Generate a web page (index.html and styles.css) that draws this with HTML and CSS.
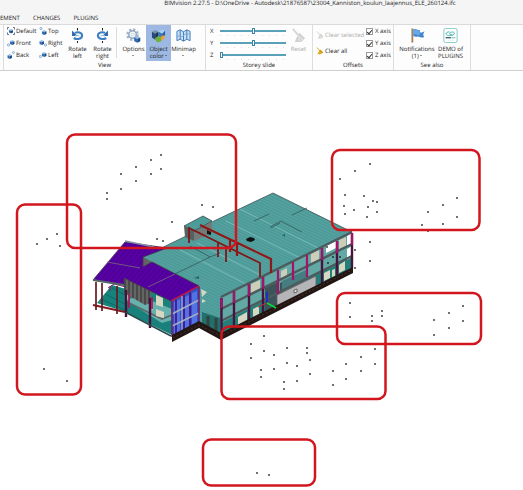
FILE: index.html
```
<!DOCTYPE html>
<html lang="en">
<head>
    <meta charset="UTF-8">
    <meta name="viewport" content="width=device-width, initial-scale=1.0">
    <title>BIMvision 2.27.5</title>
    <link rel="stylesheet" href="styles.css">
</head>
<body>
    <!-- shared icons -->
    <svg class="sprite" aria-hidden="true">
        <symbol id="cube" viewBox="0 0 10 10">
            <path d="M1 3l4-2 4 2-4 2z" fill="#8fbbe8"/>
            <path d="M1 3l4 2v5L1 8z" fill="#2f69ae"/>
            <path d="M9 3L5 5v5l4-2z" fill="#174986"/>
        </symbol>
        <symbol id="view-default" viewBox="0 0 16 16">
            <path d="M1 5V1h3M12 1h3v4M15 11v4h-3M4 15H1v-4" fill="none" stroke="#33475f" stroke-width="1.5"/>
            <use href="#cube" x="3" y="3" width="10" height="10"/>
        </symbol>
        <symbol id="view-front" viewBox="0 0 16 16">
            <use href="#cube" x="5" y="1" width="11" height="11"/>
            <circle cx="3" cy="12" r="2.4" fill="#dbe9f7" stroke="#5580b0"/>
        </symbol>
        <symbol id="view-back" viewBox="0 0 16 16">
            <use href="#cube" x="0" y="5" width="11" height="11"/>
            <circle cx="13" cy="3" r="2.2" fill="#dbe9f7" stroke="#5580b0"/>
        </symbol>
        <symbol id="view-top" viewBox="0 0 16 16">
            <use href="#cube" x="5" y="5" width="11" height="11"/>
            <circle cx="4" cy="3" r="2.4" fill="#dbe9f7" stroke="#5580b0"/>
        </symbol>
        <symbol id="view-right" viewBox="0 0 16 16">
            <use href="#cube" x="0" y="1" width="11" height="11"/>
            <circle cx="13" cy="12" r="2.4" fill="#dbe9f7" stroke="#5580b0"/>
        </symbol>
        <symbol id="view-left" viewBox="0 0 16 16">
            <use href="#cube" x="5" y="1" width="11" height="11"/>
            <circle cx="3" cy="11" r="2.4" fill="#dbe9f7" stroke="#5580b0"/>
        </symbol>
        <symbol id="rotate" viewBox="0 0 32 36">
            <path d="M16 0v6M16 31v5" stroke="#222" stroke-width="2.500"/>
            <path d="M10 12c6-4 17-1 17 6 0 8-12 11-20 6" fill="none" stroke="#3d7fc2" stroke-width="5"/>
            <path d="M3 6v13h13z" fill="#2c68aa"/>
            <path d="M10 19c5-2 10-1 10 1" fill="none" stroke="#8db9e4" stroke-width="3"/>
        </symbol>
        <symbol id="gear" viewBox="0 0 32 32">
            <circle cx="14" cy="14" r="11" fill="none" stroke="#a7b6c6" stroke-width="5" stroke-dasharray="5 3.6"/>
            <circle cx="14" cy="14" r="8" fill="#f2f6fa" stroke="#8fa6bf" stroke-width="3"/>
            <circle cx="14" cy="14" r="3" fill="#fff" stroke="#a7b6c6"/>
            <use href="#cube" x="16" y="15" width="16" height="17"/>
        </symbol>
        <symbol id="colors" viewBox="0 0 32 32">
            <path d="M2 8l7-4 7 4-7 4z" fill="#7890a8"/>
            <path d="M2 8l7 4v13l-7-5z" fill="#294a73"/>
            <path d="M9 12l7-4v11l-7 6z" fill="#1a3559"/>
            <path d="M16 8l7-5 7 3-6 6z" fill="#a4cffa"/>
            <path d="M16 8l8 4v9l-8-3z" fill="#3c79ba"/>
            <path d="M30 6l-6 6v9l6-5z" fill="#2a5d9c"/>
            <path d="M8 23l7-6 9 4-2 7-9 3z" fill="#6bb33c"/>
            <path d="M21 18l8-3-1 8-7 4z" fill="#ef9d31"/>
        </symbol>
        <symbol id="map" viewBox="0 0 32 28">
            <path d="M2 5l7-3 7 4 7-4 7 3v20l-7-3-7 4-7-4-7 3z" fill="#c9e0f6" stroke="#3e7ab8" stroke-width="2"/>
            <path d="M9 2v20M16 6v20M23 2v20" stroke="#3e7ab8" stroke-width="2"/>
            <path d="M3 17c5-7 9 4 13-3s9 1 13-5" fill="none" stroke="#72a5d7" stroke-width="2"/>
        </symbol>
        <symbol id="broom" viewBox="0 0 16 16">
            <path d="M2 1l6 7" stroke="currentColor" stroke-width="2"/>
            <path d="M9 5l6 6-7 4-5-1 2-4z" fill="currentColor"/>
            <path d="M7 6l6 6" stroke="#8d742e" stroke-width="1"/>
        </symbol>
        <symbol id="broom-off" viewBox="0 0 16 16">
            <path d="M2 1l6 7" stroke="#d5d5d5" stroke-width="2"/>
            <path d="M9 5l6 6-4 4H4l2-5z" fill="#d2d2d2"/>
            <path d="M7 8l6 5M8 11l2 3" stroke="#efefef"/>
        </symbol>
        <symbol id="flag" viewBox="0 0 32 32">
            <path d="M3 1h4v30H3z" fill="#a98354"/>
            <path d="M7 3c6-3 9 3 14 1v5c3 2 6 0 10-2l-3 7 2 5c-6 4-10-2-14-1-4 1-6 0-9-1z" fill="#4285cf"/>
            <path d="M7 4c6-3 8 3 14 1v10c-5 2-8-4-14-1z" fill="#67a8e8"/>
        </symbol>
        <symbol id="plugin" viewBox="0 0 32 34">
            <rect x="1" y="1" width="30" height="32" rx="4" fill="#fff" stroke="#55b7b0" stroke-width="1.6"/>
            <path d="M14 9c-8-1-12 6-3 8 7 1 14-1 14-5 0-3-8-5-11 1 1 4 5 3 7 0" fill="none" stroke="#35aaa1" stroke-width="2"/>
            <path d="M5 22h12" stroke="#445c69" stroke-width="3"/>
            <path d="M18 22h9" stroke="#8dcbc7" stroke-width="3"/>
            <path d="M9 28h14" stroke="#c8e6e3"/>
        </symbol>
    </svg>

    <header class="titlebar">
        <h1 class="title">BIMvision 2.27.5 - D:\OneDrive - Autodesk\21876587\23004_Kanniston_koulun_laajennus_ELE_260124.ifc</h1>
        <nav class="tabs">
            <a href="#">EMENT</a>
            <a href="#">CHANGES</a>
            <a href="#">PLUGINS</a>
        </nav>
    </header>

    <div class="ribbon">
        <section class="group group-view">
            <div class="tools">
                <div class="stack stack-first">
                    <button class="small"><svg><use href="#view-default"/></svg>Default</button>
                    <button class="small"><svg><use href="#view-front"/></svg>Front</button>
                    <button class="small"><svg><use href="#view-back"/></svg>Back</button>
                </div>
                <div class="stack">
                    <button class="small"><svg><use href="#view-top"/></svg>Top</button>
                    <button class="small"><svg><use href="#view-right"/></svg>Right</button>
                    <button class="small"><svg><use href="#view-left"/></svg>Left</button>
                </div>
                <button class="large"><svg><use href="#rotate"/></svg><span>Rotate<br>left</span></button>
                <button class="large"><svg class="mirrored"><use href="#rotate"/></svg><span>Rotate<br>right</span></button>
                <div class="divider"></div>
                <button class="large"><svg><use href="#gear"/></svg><span>Options<br><i class="arrow"></i></span></button>
                <button class="large active"><svg><use href="#colors"/></svg><span>Object<br>color <i class="arrow"></i></span></button>
                <button class="large"><svg><use href="#map"/></svg><span>Minimap<br><i class="arrow"></i></span></button>
            </div>
            <h2>View</h2>
        </section>

        <section class="group group-storey">
            <div class="tools">
                <div class="stack sliders">
                    <label>X <input type="range" min="0" max="100" value="50"></label>
                    <label>Y <input type="range" min="0" max="100" value="50"></label>
                    <label>Z <input type="range" min="0" max="100" value="0"></label>
                </div>
                <button class="large" disabled><svg><use href="#broom-off"/></svg><span>Reset</span></button>
            </div>
            <h2>Storey slide</h2>
        </section>

        <section class="group group-offsets">
            <div class="tools">
                <div class="stack clears">
                    <button class="small" disabled><svg><use href="#broom-off"/></svg>Clear selected</button>
                    <button class="small gold"><svg><use href="#broom"/></svg>Clear all</button>
                </div>
                <div class="stack">
                    <label class="check"><input type="checkbox" checked>X axis</label>
                    <label class="check"><input type="checkbox" checked>Y axis</label>
                    <label class="check"><input type="checkbox" checked>Z axis</label>
                </div>
            </div>
            <h2>Offsets</h2>
        </section>

        <section class="group group-also">
            <div class="tools">
                <button class="large wide"><svg><use href="#flag"/></svg><span>Notifications<br>(1) <i class="arrow"></i></span></button>
                <button class="large"><svg><use href="#plugin"/></svg><span>DEMO of<br>PLUGINS</span></button>
            </div>
            <h2>See also</h2>
        </section>
    </div>

    <main class="viewer">
        <svg viewBox="0 71 523 419" role="img" aria-label="Building model with marked areas">
            <defs>
                <pattern id="deck" width="8" height="3" patternUnits="userSpaceOnUse" patternTransform="skewY(26)">
                    <rect width="8" height="3" fill="#57a5a3"/>
                    <path d="M0 1h8" stroke="#3f8b89" stroke-width=".8"/>
                </pattern>
                <pattern id="purple" width="5" height="8" patternUnits="userSpaceOnUse" patternTransform="skewX(-40)">
                    <rect width="5" height="8" fill="#5800a5"/>
                    <path d="M1 0v8" stroke="#3c007c" stroke-width=".8"/>
                </pattern>
                <pattern id="slats" width="4" height="8" patternUnits="userSpaceOnUse">
                    <rect width="4" height="8" fill="#656565"/>
                    <path d="M1 0v8" stroke="#363636" stroke-width="1.2"/>
                </pattern>
            </defs>

            <!-- left porch -->
            <path d="M112 285l14 4v23l-29-9z" fill="#15827c"/>
            <path d="M105 294l20 10M101 299l24 11M112 288l13 7" stroke="#0b5e5a" stroke-width=".7"/>
            <path d="M93 305l32 7" stroke="#851a20" stroke-width="2"/>
            <path d="M96 282v28M102 283v28M117 286v28" stroke="#651c22" stroke-width="1.7"/>
            <path d="M108 288l6-4 12 3M110 286v5" stroke="#8a1662" fill="none"/>

            <!-- middle wing -->
            <path d="M125 279l47 20v36l-47-23z" fill="#18817c"/>
            <path d="M125 300l15-4 32 13v11l-10 3z" fill="#67b1ae"/>
            <path d="M125 301l37 18 10-4" fill="none" stroke="#596868" stroke-width="1.8"/>
            <path d="M156 295l7 3v9l-7-2zM156 309l8 3v6l-8-2z" fill="#d8d7c1"/>
            <path d="M125 291l4 2v7l-4-1zM149 301l4 2v7l-4-2z" fill="#d8d7c1"/>
            <path d="M124 278l27 12v13l-6 2-21-12z" fill="url(#slats)"/>
            <path d="M126 290v27M150 298v30" stroke="#46103a" stroke-width="2.4"/>
            <path d="M129 294v14M152 297v12" stroke="#a51b61" stroke-width="1.8"/>
            <path d="M125 312l46 24" stroke="#284949" stroke-width="1.5"/>

            <!-- main roof and the wall below it -->
            <path d="M143 257l41-20 30-16 59-28 79 39-131 65v37l-22-11v-37l-47-23-9 2z" fill="url(#deck)" stroke="#3f5555" stroke-width=".8"/>
            <path d="M143 257l9 5-4 4-5 2z" fill="#5d6463"/>
            <path d="M226 221l94 47M240 209l100 50M180 250l76 39M197 243l67 34" stroke="#83c3c0" stroke-width="1.1" opacity=".7"/>
            <path d="M148 287l62-30M190 246l20 11 10-4M270 227l11-6 21 11M292 215l15-7M271 228l9-5M254 221l15-7" fill="none" stroke="#315b5b" stroke-width=".8"/>
            <path d="M246 239l4-2 4 1 1 2-4 2-4-1z" fill="#111"/>
            <path d="M194 278l5-2v3zM282 235l3-1v3z" fill="#2b6463"/>

            <!-- purple roof -->
            <path d="M125 242l42 6-24 9v10l9-5 47 24-28 15-47-23v7l-31-5z" fill="url(#purple)" stroke="#44324d" stroke-width=".8"/>
            <path d="M125 241l29 6" stroke="#8390a4" stroke-width="1.5"/>
            <path d="M107 262l33 6M148 287l27-13" stroke="#77707c" stroke-width=".8"/>
            <path d="M93 280l31 5" stroke="#566" stroke-width="2"/>

            <!-- glazed stair tower -->
            <path d="M171 301l28-15v37l-27 14z" fill="#3151c7"/>
            <path d="M174 302l6-3v32l-6 3zM185 297l4-2v32l-4 2zM192 293l5-2v32l-5 2z" fill="#5271e2"/>
            <path d="M176 300v34M184 295v35M190 292v35" stroke="#4a168c" stroke-width="1.8"/>
            <path d="M172 314l27-14M172 326l27-13" stroke="#a0adc1" stroke-width="1.5"/>
            <path d="M171 301l28-15" stroke="#bb1743" stroke-width="1.5"/>
            <path d="M172 301v36M199 287v37" stroke="#732168" stroke-width="1.5"/>
            <path d="M182 296v35" stroke="#c1c6c7"/>

            <!-- wall between tower and long facade -->
            <path d="M201 289l6 3-5 5zM202 299l4 2-4 2z" fill="#d8d7c1"/>
            <path d="M202 312l18 6v16l-18-9z" fill="#236f6c"/>
            <path d="M208 316v12M216 318v14" stroke="#314343" stroke-width="3"/>

            <!-- long facade -->
            <path d="M221 297l131-65v37l-131 65z" fill="#62a9a6"/>
            <path d="M221 323l131-67v12l-131 66z" fill="#237f79"/>
            <path d="M347 236l5-3v11l-5 3zM347 249l5-3v11l-5 3zM326 246l10-5v7l-10 5z" fill="#fff"/>
            <path d="M251 284l9-4v9l-9 5zM311 254l8-4v10l-8 3zM339 240l7-3v9l-7 3zM281 271l6-3v9l-6 3z" fill="#cdcdb8"/>
            <path d="M238 317l9-5v8l-9 5zM253 309l6-3v8l-6 3zM324 273l6-3v8l-6 3zM332 270l3-1v7l-3 1zM339 265l6-4v9l-6 3z" fill="#d8d7c1"/>
            <path d="M265 288l13-6v26l-13 7zM280 283l12-6v12l-12 5z" fill="#3b5359"/>
            <path d="M282 281l24-11v12l-24 11z" fill="#467d80"/>
            <path d="M221 297l131-65M221 309l131-65M221 321l131-65" fill="none" stroke="#4c5b5c" stroke-width="2.4"/>
            <path d="M277 295l39-19v12l-39 19z" fill="#b5b4b7" stroke="#626066" stroke-width=".8"/>
            <path d="M294 290l3-1v3l-3 1z" fill="#ddd" stroke="#444" stroke-width=".7"/>
            <path d="M221.500 298v36M234 291v36M249 284v36M263 277v36M322 248v35M337 241v34M352 233v35" stroke="#46143e" stroke-width="2.4"/>
            <path d="M221.500 298v10M234 291v12M249 284v12M263 277v12M278 270v24M293 262v18M307 255v22M322 248v12M337 241v12M352 233v12" stroke="#a3126c" stroke-width="2.2"/>

            <!-- foundation -->
            <path d="M172 335l27-14 22 12 132-66v6l-132 67-22-12-27 14z" fill="#211613"/>
            <path d="M173 338l26-13 22 11 131-66" fill="none" stroke="#5f3424" stroke-width=".8" stroke-dasharray="2 2"/>

            <!-- origin axes -->
            <path d="M267 303v-11" stroke="#1428e0" stroke-width="1.6"/>
            <path d="M267 303l9 5" stroke="#08dc3a" stroke-width="1.6"/>
            <path d="M267 303l-9 4" stroke="#cf2525"/>

            <!-- rooftop unit and steel frames -->
            <path d="M184 226l10 5v10l-9-4z" fill="#58605f"/>
            <path d="M194 231l18-10v12l-18 8z" fill="#747a78"/>
            <path d="M184 226l19-10 9 5-18 10z" fill="#4b9d9b" stroke="#3d4b4b" stroke-width=".8"/>
            <path d="M207 230l4 2v3l-4-1z" fill="#111"/>
            <path d="M189 243v-15l71 35v14M218 242v15M226 246v16" fill="none" stroke="#801719" stroke-width="1.8"/>
            <path d="M200 225l71 34v14M230 239v13M237 243v13" fill="none" stroke="#8f191a" stroke-width="2.2"/>

            <!-- detached elements -->
            <path class="dots" d="M161 155h0M151 160h0M136 167h0M161 169h0M151 174h0M121 174h0M136 181h0M121 189h0M107 193h0M107 199h0M202 205h0M213 207h0M172 222h0M157 239h0M163 241h0M57 234h0M47 239h0M37 244h0M60 246h0M44 369h0M67 381h0"/>
            <path class="dots" d="M370 164h0M355 171h0M340 179h0M345 195h0M364 196h0M373 201h0M377 202h0M344 206h0M368 207h0M354 210h0M345 214h0M377 212h0M367 217h0M457 198h0M443 205h0M428 212h0M457 217h0M422 225h0M443 224h0M428 231h0M370 242h0M355 250h0M370 261h0M355 268h0M327 247h0M333 257h0M340 257h0M328 263h0"/>
            <path class="dots" d="M350 303h0M350 317h0M382 311h0M372 316h0M382 316h0M372 321h0M463 306h0M449 313h0M434 320h0M463 321h0M449 328h0M434 335h0"/>
            <path class="dots" d="M264 336h0M251 344h0M264 351h0M251 358h0M274 355h0M287 348h0M307 348h0M307 353h0M310 360h0M287 363h0M297 366h0M261 370h0M274 369h0M261 377h0M310 374h0M284 382h0M297 381h0M284 389h0M333 371h0M346 364h0M361 357h0M375 349h0M375 364h0M361 371h0M346 379h0M333 385h0M257 473h0M269 475h0"/>

            <!-- marked areas -->
            <g class="marks">
                <rect x="67" y="134.500" width="169" height="113.500" rx="8"/>
                <rect x="17" y="204.500" width="64" height="190" rx="8"/>
                <rect x="332" y="150" width="147.500" height="80" rx="8"/>
                <rect x="337" y="293" width="144" height="51" rx="8"/>
                <rect x="221.500" y="326.500" width="164" height="72.500" rx="8"/>
                <rect x="203" y="439.500" width="112" height="46" rx="8"/>
            </g>
        </svg>
    </main>
</body>
</html>
```
FILE: styles.css
```
* {
    box-sizing: border-box;
}
body {
    margin: 0;
    font-family: "Open Sans", "Noto Sans", sans-serif;
    font-size: 6px;
    line-height: 7px;
    text-rendering: geometricPrecision;
    color: #222;
    background-color: #fff;
}
button, input {
    font: inherit;
    color: inherit;
    margin: 0;
    text-rendering: inherit;
}
.sprite {
    display: none;
}
.titlebar {
    height: 24px;
    background-color: #f5f5f5;
}
.title {
    margin: 0;
    padding-left: 97px;
    font-size: 6px;
    font-weight: normal;
    line-height: 7px;
    text-align: center;
    white-space: nowrap;
}
.tabs {
    display: flex;
    gap: 13px;
    padding-top: 8px;
}
.tabs a {
    color: #222;
    text-decoration: none;
}

/* ribbon */
.ribbon {
    display: flex;
    height: 47px;
    background-color: #fdfdfd;
    border-top: 1px solid #dadada;
    border-bottom: 1px solid #cfcfcf;
    overflow: hidden;
}
.group {
    display: flex;
    flex-direction: column;
    flex: none;
    border-right: 1px solid #ddd;
}
.group h2 {
    margin: 0;
    font-size: 6px;
    font-weight: normal;
    line-height: 8px;
    text-align: center;
}
.tools {
    display: flex;
    height: 36px;
}
.group-view {
    width: 203px;
    margin-left: 3px;
    border-left: 1px solid #ddd;
}
.group-storey {
    width: 107px;
}
.group-offsets {
    width: 81px;
}
.group-also {
    width: 77px;
}
.stack {
    display: flex;
    flex-direction: column;
    width: 26px;
}
.stack-first {
    width: 32px;
    margin-left: 3px;
}
button {
    padding: 0;
    border: none;
    background: none;
    white-space: nowrap;
}
button:disabled {
    color: #aaa;
}
.small {
    display: flex;
    align-items: center;
    gap: 1px;
    height: 12px;
}
.small svg {
    flex: none;
    width: 8px;
    height: 8px;
}
.large {
    display: flex;
    flex-direction: column;
    align-items: center;
    flex: none;
    gap: 3px;
    width: 25px;
    padding-top: 3px;
}
.large svg {
    width: 15px;
    height: 15px;
}
.mirrored {
    transform: scaleX(-1);
}
.wide {
    width: 42px;
    margin-left: 2px;
}
.active {
    background-color: #9db9e3;
}
.divider {
    width: 1px;
    height: 31px;
    margin: 2px 4px 0 1px;
    background-color: #ddd;
}
.arrow {
    display: inline-block;
    border: 1px solid transparent;
    border-top-color: #333;
    vertical-align: middle;
}

/* storey sliders */
.sliders {
    width: 80px;
    padding-left: 4px;
}
.sliders label {
    display: flex;
    align-items: center;
    justify-content: space-between;
    height: 12px;
}
.sliders input {
    appearance: none;
    width: 66px;
    height: 10px;
    background: linear-gradient(#5aa0b8, #5aa0b8) center / 100% 2px no-repeat,
                repeating-linear-gradient(90deg, #ddd 0 1px, transparent 1px 7px) bottom / 100% 1px no-repeat;
}
.sliders input::-webkit-slider-thumb {
    appearance: none;
    width: 3px;
    height: 6px;
    border: 1px solid #3d87a4;
    background-color: #fff;
}

.clears {
    width: 50px;
    padding: 2px 0 0 3px;
    margin-right: 3px;
}
.clears .small {
    height: 16px;
}
.gold {
    color: #222;
}
.gold svg {
    color: #e2ac22;
}
.check {
    display: flex;
    align-items: center;
    gap: 2px;
    height: 12px;
    white-space: nowrap;
}
.check input {
    appearance: none;
    display: grid;
    place-items: center;
    width: 7px;
    height: 7px;
    border: 1px solid #999;
    background-color: #fff;
}
.check input:checked::before {
    content: "";
    width: 2px;
    height: 4px;
    border: solid #333;
    border-width: 0 1px 1px 0;
    transform: rotate(40deg);
}

/* model view */
.viewer svg {
    display: block;
    width: 100%;
}
.dots {
    fill: none;
    stroke: #111;
    stroke-width: 1.6;
    stroke-linecap: square;
}
.marks rect {
    fill: none;
    stroke: #d2161e;
    stroke-width: 2.5;
}
```
